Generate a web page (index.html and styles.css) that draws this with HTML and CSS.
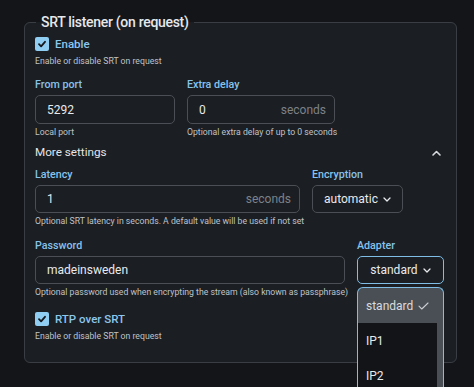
FILE: index.html
```html
<!DOCTYPE html>
<html>
<head>
	<title>SRT listener</title>
	<link rel="stylesheet" href="styles.css">
</head>
<body>
	<div class="page">
		<fieldset class="panel">
			<legend>SRT listener (on request)</legend>

			<div class="check-row">
				<span class="checkbox"><svg width="10" height="10" viewBox="0 0 10 10"><path d="M2 5.2 L4.1 7.3 L8 2.8" fill="none" stroke="#15181c" stroke-width="1.8" stroke-linecap="round" stroke-linejoin="round"/></svg></span>
				<span class="check-label">Enable</span>
			</div>
			<div class="hint">Enable or disable SRT on request</div>

			<div class="field-row">
				<div class="field w-port">
					<div class="label">From port</div>
					<div class="input"><span class="value">5292</span></div>
					<div class="hint">Local port</div>
				</div>
				<div class="field w-delay">
					<div class="label">Extra delay</div>
					<div class="input"><span class="value">0</span><span class="unit">seconds</span></div>
					<div class="hint">Optional extra delay of up to 0 seconds</div>
				</div>
			</div>

			<div class="section-head">
				<span>More settings</span>
				<svg width="9" height="6" viewBox="0 0 9 6"><path d="M1 5 L4.5 1.5 L8 5" fill="none" stroke="#d6d9dd" stroke-width="1.6" stroke-linecap="round" stroke-linejoin="round"/></svg>
			</div>

			<div class="field-row row-tight">
				<div class="field w-latency">
					<div class="label">Latency</div>
					<div class="input small"><span class="value">1</span><span class="unit">seconds</span></div>
					<div class="hint">Optional SRT latency in seconds. A default value will be used if not set</div>
				</div>
				<div class="field w-enc">
					<div class="label">Encryption</div>
					<div class="select">automatic <svg width="8" height="5" viewBox="0 0 8 5"><path d="M1 1 L4 4 L7 1" fill="none" stroke="#e8eaed" stroke-width="1.3" stroke-linecap="round" stroke-linejoin="round"/></svg></div>
				</div>
			</div>

			<div class="field-row row-wide">
				<div class="field w-pass">
					<div class="label">Password</div>
					<div class="input small"><span class="value">madeinsweden</span></div>
					<div class="hint">Optional password used when encrypting the stream (also known as passphrase)</div>
				</div>
				<div class="field w-adapter">
					<div class="label">Adapter</div>
					<div class="select focused">standard <svg width="8" height="5" viewBox="0 0 8 5"><path d="M1 1 L4 4 L7 1" fill="none" stroke="#e8eaed" stroke-width="1.3" stroke-linecap="round" stroke-linejoin="round"/></svg></div>
					<div class="menu">
						<div class="option selected">standard <svg width="11" height="8" viewBox="0 0 11 8"><path d="M1 4.2 L3.8 7 L10 1" fill="none" stroke="#c9ccd0" stroke-width="1.1" stroke-linecap="round" stroke-linejoin="round"/></svg></div>
						<div class="option">IP1</div>
						<div class="option">IP2</div>
					</div>
				</div>
			</div>

			<div class="check-row check-gap">
				<span class="checkbox"><svg width="10" height="10" viewBox="0 0 10 10"><path d="M2 5.2 L4.1 7.3 L8 2.8" fill="none" stroke="#15181c" stroke-width="1.8" stroke-linecap="round" stroke-linejoin="round"/></svg></span>
				<span class="check-label">RTP over SRT</span>
			</div>
			<div class="hint">Enable or disable SRT on request</div>
		</fieldset>
	</div>
</body>
</html>
```

FILE: styles.css
```css
html, body {
	margin: 0;
	height: 100%;
	background-color: #131518;
	overflow: hidden;
}

body {
	font-family: Roboto, "Liberation Sans", sans-serif;
	color: #e8eaed;
}

.page {
	padding: 13px 0 0 24px;
}

.panel {
	width: 410px;
	margin: 0;
	padding: 0 11px 20px 10px;
	background-color: #1b1e23;
	border: 1px solid #3a3e44;
	border-radius: 6px;
}

.panel legend {
	margin-left: 1px;
	padding: 0 5px;
	font-size: 14px;
	font-weight: 500;
	letter-spacing: -0.3px;
	line-height: 18px;
	color: #e6e8eb;
}

.check-row {
	display: flex;
	align-items: center;
	gap: 6px;
	height: 14px;
	margin-top: 6px;
}

.check-gap {
	margin-top: 14px;
}

.checkbox {
	display: flex;
	align-items: center;
	justify-content: center;
	width: 14px;
	height: 14px;
	border-radius: 2px;
	background-color: #8fcdf3;
}

.check-label {
	font-size: 11.5px;
	font-weight: 500;
	color: #8cc7ee;
}

.hint {
	margin-top: 4px;
	font-size: 8.7px;
	line-height: 12px;
	color: #bfc3c8;
	white-space: nowrap;
}

.field-row {
	display: flex;
	gap: 12px;
	margin-top: 11px;
}

.row-tight {
	margin-top: 8px;
}

.row-wide {
	margin-top: 12px;
}

.field {
	position: relative;
}

.w-port { width: 140px; }
.w-delay { width: 148px; }
.w-latency { width: 265px; }
.w-enc { width: 91px; }
.w-pass { width: 310px; }
.w-adapter { width: 87px; }

.label {
	margin-bottom: 4px;
	font-size: 10.7px;
	font-weight: 500;
	line-height: 13px;
	color: #86c3ec;
}

.input {
	display: flex;
	align-items: center;
	justify-content: space-between;
	box-sizing: border-box;
	height: 29px;
	padding: 0 8px 0 11px;
	border: 1px solid #4b4f55;
	border-radius: 5px;
	font-size: 12px;
}

.input.small {
	height: 28px;
}

.input + .hint {
	margin-top: 2px;
}

.unit {
	color: #7d8289;
}

.select {
	display: flex;
	align-items: center;
	justify-content: center;
	gap: 5px;
	box-sizing: border-box;
	height: 28px;
	border: 1px solid #4b4f55;
	border-radius: 5px;
	font-size: 12px;
}

.select.focused {
	border: 1.5px solid #7fbde6;
}

.section-head {
	display: flex;
	align-items: center;
	justify-content: space-between;
	margin-top: 7px;
	padding-right: 4px;
	font-size: 11.7px;
	line-height: 15px;
	color: #e3e5e8;
}

.menu {
	position: absolute;
	top: 48px;
	left: 0;
	width: 87px;
	height: 100px;
	box-sizing: border-box;
	border: 1.5px solid #7fbde6;
	border-bottom: none;
	border-radius: 6px 6px 0 0;
	background-color: #4a4e55;
	overflow: hidden;
}

.option {
	display: flex;
	align-items: center;
	gap: 5px;
	height: 35px;
	margin-right: 6px;
	padding-left: 8px;
	font-size: 12px;
	background-color: #121417;
	color: #e8eaed;
}

.option.selected {
	background-color: transparent;
	color: #d9dbde;
}
```
